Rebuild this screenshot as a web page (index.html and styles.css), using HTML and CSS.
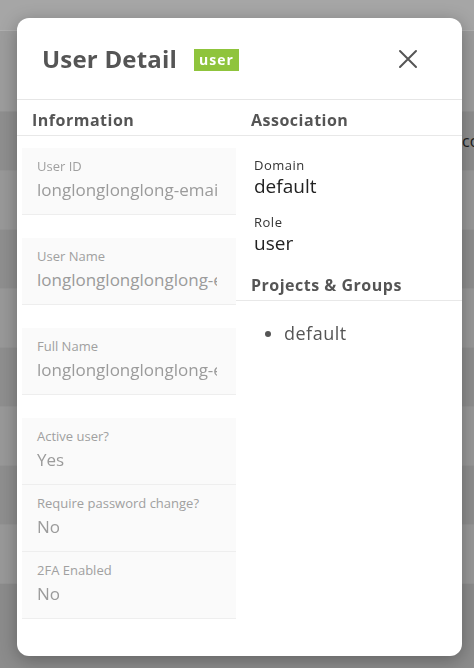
FILE: index.html
```html
<!DOCTYPE html>
<html lang="en">
<head>
<meta charset="utf-8">
<title>User Detail</title>
<link rel="stylesheet" href="styles.css">
</head>
<body>
<div class="page">
  <div class="topbar"></div>
  <div class="row row-head"></div>
  <div class="row row-dark"><span class="cell-text">confirmed</span></div>
  <div class="row row-light"></div>
  <div class="row row-dark"></div>
  <div class="row row-light"></div>
  <div class="row row-dark"></div>
  <div class="row row-light"></div>
  <div class="row row-dark"></div>
  <div class="row row-light"></div>
</div>

<div class="modal">
  <div class="modal-header">
    <h1 class="modal-title">User Detail</h1>
    <span class="badge">user</span>
    <button class="close" aria-label="Close">
      <svg viewBox="0 0 20 20" width="20" height="20"><path d="M2 2 L18 18 M18 2 L2 18" stroke="#555" stroke-width="2" stroke-linecap="round" fill="none"/></svg>
    </button>
  </div>
  <div class="modal-body">
    <div class="col col-left">
      <h2 class="section-title">Information</h2>
      <div class="fields">
        <div class="field spaced">
          <div class="field-label">User ID</div>
          <div class="field-value">longlonglonglong-email@example.com</div>
        </div>
        <div class="field spaced">
          <div class="field-label">User Name</div>
          <div class="field-value">longlonglonglonglong-email@example.com</div>
        </div>
        <div class="field spaced">
          <div class="field-label">Full Name</div>
          <div class="field-value">longlonglonglonglong-email@example.com</div>
        </div>
        <div class="field">
          <div class="field-label">Active user?</div>
          <div class="field-value">Yes</div>
        </div>
        <div class="field">
          <div class="field-label">Require password change?</div>
          <div class="field-value">No</div>
        </div>
        <div class="field">
          <div class="field-label">2FA Enabled</div>
          <div class="field-value">No</div>
        </div>
      </div>
    </div>
    <div class="col col-right">
      <h2 class="section-title">Association</h2>
      <div class="assoc">
        <div class="assoc-item">
          <div class="assoc-label">Domain</div>
          <div class="assoc-value">default</div>
        </div>
        <div class="assoc-item">
          <div class="assoc-label">Role</div>
          <div class="assoc-value">user</div>
        </div>
      </div>
      <h2 class="section-title sub">Projects &amp; Groups</h2>
      <ul class="groups">
        <li>default</li>
      </ul>
    </div>
  </div>
</div>
</body>
</html>
```

FILE: styles.css
```css
html, body {
  margin: 0;
  padding: 0;
  height: 668px;
  overflow: hidden;
}
body {
  background: #8c8c8c;
  font-family: "Open Sans", "Noto Sans", sans-serif;
}
.page {
  display: flex;
  flex-direction: column;
}
.topbar {
  height: 30px;
  background: #a6a6a6;
  border-bottom: 1px solid #b0b0b0;
}
.row {
  height: 58px;
  border-bottom: 1px solid #959595;
  display: flex;
  justify-content: flex-end;
  align-items: center;
}
.row-head {
  height: 80px;
  background: #9d9d9d;
}
.row-dark { background: #8f8f8f; }
.row-light { background: #999999; }
.cell-text {
  width: 12px;
  overflow: hidden;
  white-space: nowrap;
  font-size: 16px;
  color: #1c1c1c;
}

.modal {
  position: fixed;
  left: 17px;
  top: 18px;
  width: 445px;
  height: 638px;
  background: #fff;
  border-radius: 12px;
  box-shadow: 0 4px 18px rgba(0,0,0,0.3);
  overflow: hidden;
  display: flex;
  flex-direction: column;
}
.modal-header {
  height: 81px;
  border-bottom: 1px solid #e6e6e6;
  display: flex;
  align-items: center;
  padding: 0 44px 0 25px;
  flex-shrink: 0;
}
.modal-title {
  margin: 0;
  font-size: 24px;
  font-weight: 700;
  color: #555;
  letter-spacing: 0.2px;
}
.badge {
  margin-left: 17px;
  background: #8fc43c;
  color: #fff;
  font-weight: 700;
  font-size: 14px;
  letter-spacing: 1px;
  height: 22px;
  line-height: 22px;
  padding: 0 5px;
  margin-top: 2px;
}
.close {
  margin-left: auto;
  background: none;
  border: 0;
  padding: 0;
  width: 20px;
  height: 20px;
  display: flex;
}

.modal-body {
  display: grid;
  grid-template-columns: 219px 1fr;
  flex: 1;
}
.section-title {
  margin: 0;
  font-size: 16px;
  font-weight: 700;
  color: #555;
  letter-spacing: 0.5px;
  line-height: 18px;
  padding: 11px 15px 6px;
  border-bottom: 1px solid #e8e8e8;
}
.fields {
  padding: 12px 0 0 5px;
  display: flex;
  flex-direction: column;
}
.field {
  background: #fafafa;
  border-bottom: 1px solid #eeeeee;
  padding: 10px 19px 13px 15px;
}
.field.spaced {
  margin-bottom: 23px;
}
.field-label {
  font-size: 13px;
  line-height: 17px;
  color: #a0a0a0;
}
.field-value {
  margin-top: 3px;
  font-size: 17px;
  line-height: 23px;
  color: #9b9b9b;
  white-space: nowrap;
  overflow: hidden;
}

.assoc {
  padding: 20px 18px 0;
}
.assoc-item + .assoc-item {
  margin-top: 15px;
}
.assoc-label {
  font-size: 13px;
  line-height: 18px;
  letter-spacing: 0.5px;
  color: #333;
}
.assoc-value {
  font-size: 19px;
  line-height: 24px;
  color: #222;
}
.section-title.sub {
  margin-top: 10px;
}
.groups {
  margin: 20px 0 0;
  padding-left: 48px;
  font-size: 18px;
  line-height: 24px;
  color: #555;
  letter-spacing: 0.5px;
}
```
